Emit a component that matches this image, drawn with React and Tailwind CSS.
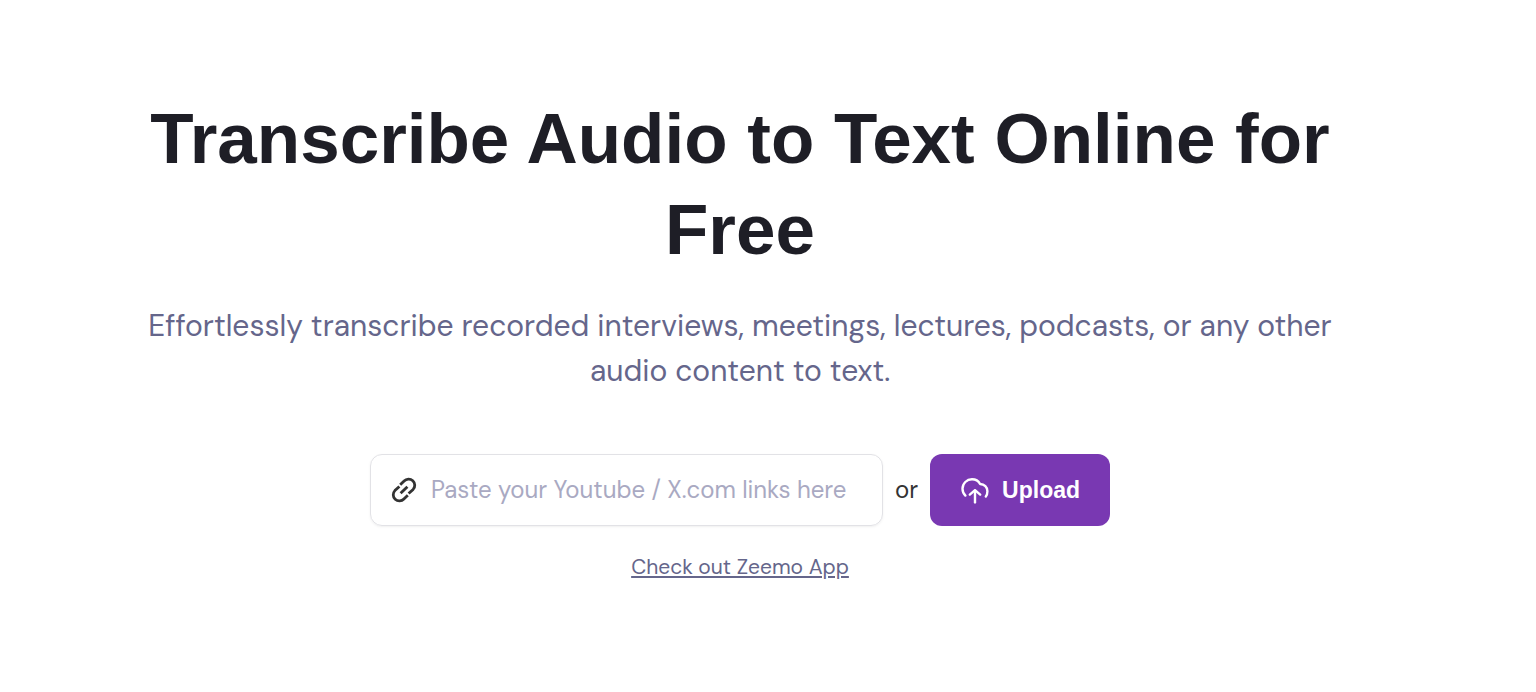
import React from "react";

function LinkIcon() {
  return (
    <svg viewBox="0 0 26 26" className="size-[26px] shrink-0 text-[#333333]" fill="none" stroke="currentColor" strokeWidth="2.8" strokeLinecap="butt" aria-hidden="true">
      <path d="M9.2 7.8 L13.1 4 A6 6 0 0 1 22.1 12.4 L17.6 16.6" />
      <path d="M16.8 18.2 L12.9 22 A6 6 0 0 1 3.9 13.6 L8.4 9.4" />
      <path d="M9.6 16.3 L16.4 9.7" />
    </svg>
  );
}

function UploadIcon() {
  return (
    <svg viewBox="0 0 29 27" className="h-[27px] w-[29px] shrink-0" fill="none" stroke="currentColor" strokeWidth="2.4" strokeLinecap="round" strokeLinejoin="round" aria-hidden="true">
      <path d="M5.4 18.6 C3.6 16.8 2.5 14.4 2.5 11.7 C2.5 6.4 6.8 2.3 12 2.3 C15.6 2.3 18.5 4 20.1 7 C24.4 7.1 27.4 10.2 27.4 14.2 C27.4 16.3 26.9 18.2 25.8 19.6" />
      <path d="M15 25.4 V13.6" />
      <path d="M9.8 17.6 L15 13.2 L20.2 17.6" />
    </svg>
  );
}

export default function App() {
  return (
    <main className="min-h-screen bg-white pr-14 font-['DM_Sans',Inter,sans-serif]">
      <section className="mx-auto flex max-w-[1200px] flex-col items-center pt-[93px] text-center">
        <h1 className="font-['Liberation_Sans',Arial,sans-serif] text-[71px] leading-[91px] font-bold text-[#1e1e26]">
          Transcribe Audio to Text Online for Free
        </h1>
        <p className="mt-7 text-[30px] leading-[45px] text-[#65668b]">
          Effortlessly transcribe recorded interviews, meetings, lectures, podcasts, or any other audio content to text.
        </p>
        <form className="mt-[61px] flex items-center gap-3" onSubmit={(e) => e.preventDefault()}>
          <label className="flex h-[72px] w-[513px] items-center gap-[14px] rounded-xl border border-[#e2e2e6] px-5 shadow-sm shadow-black/5">
            <LinkIcon />
            <input
              type="text"
              aria-label="Media link"
              placeholder="Paste your Youtube / X.com links here"
              className="min-w-0 flex-1 bg-transparent text-2xl text-[#333333] outline-none placeholder:text-[#a9a9c2]"
            />
          </label>
          <span className="text-2xl text-[#333333]">or</span>
          <button type="button" className="flex h-[72px] w-[180px] items-center justify-center gap-[13px] rounded-xl bg-[#7938b2] font-['Liberation_Sans',Arial,sans-serif] text-[23px] font-bold text-white">
            <UploadIcon />
            Upload
          </button>
        </form>
        <a href="#app" className="mt-[26px] text-[21px] leading-[30px] text-[#65668b] underline underline-offset-2">
          Check out Zeemo App
        </a>
      </section>
    </main>
  );
}
